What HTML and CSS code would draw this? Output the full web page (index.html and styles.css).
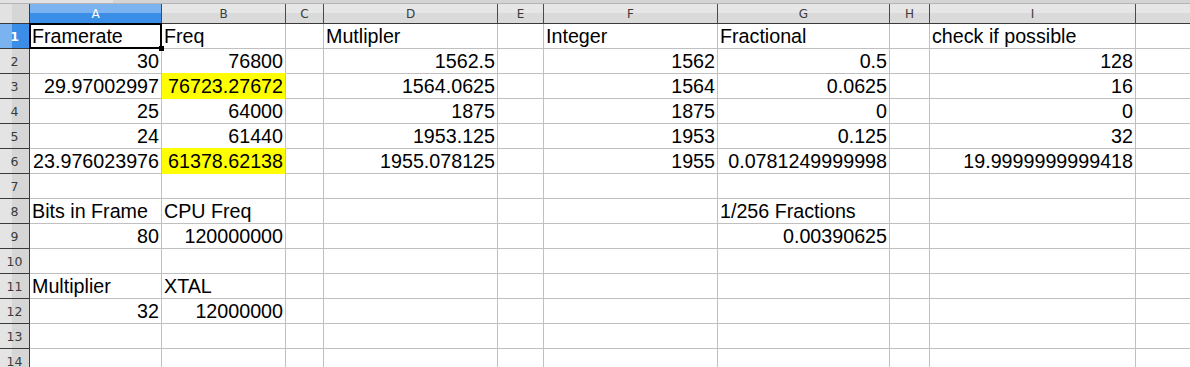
FILE: index.html
```html
<!DOCTYPE html>
<html>
<head>
<meta charset="utf-8">
<link rel="stylesheet" href="styles.css">
</head>
<body>
<div class="topstrip"><div class="tab"></div></div>
<div class="sheet">
  <div class="corner"></div>
  <div class="ch sel">A</div><div class="ch">B</div><div class="ch">C</div><div class="ch">D</div><div class="ch">E</div><div class="ch">F</div><div class="ch">G</div><div class="ch">H</div><div class="ch">I</div><div class="ch last"></div>

  <div class="rh sel">1</div>
  <div class="c cur">Framerate</div><div class="c">Freq</div><div class="c"></div><div class="c">Mutlipler</div><div class="c"></div><div class="c">Integer</div><div class="c">Fractional</div><div class="c"></div><div class="c">check if possible</div><div class="c"></div>

  <div class="rh">2</div>
  <div class="c n">30</div><div class="c n">76800</div><div class="c"></div><div class="c n">1562.5</div><div class="c"></div><div class="c n">1562</div><div class="c n">0.5</div><div class="c"></div><div class="c n">128</div><div class="c"></div>

  <div class="rh">3</div>
  <div class="c n">29.97002997</div><div class="c n hl">76723.27672</div><div class="c"></div><div class="c n">1564.0625</div><div class="c"></div><div class="c n">1564</div><div class="c n">0.0625</div><div class="c"></div><div class="c n">16</div><div class="c"></div>

  <div class="rh">4</div>
  <div class="c n">25</div><div class="c n">64000</div><div class="c"></div><div class="c n">1875</div><div class="c"></div><div class="c n">1875</div><div class="c n">0</div><div class="c"></div><div class="c n">0</div><div class="c"></div>

  <div class="rh">5</div>
  <div class="c n">24</div><div class="c n">61440</div><div class="c"></div><div class="c n">1953.125</div><div class="c"></div><div class="c n">1953</div><div class="c n">0.125</div><div class="c"></div><div class="c n">32</div><div class="c"></div>

  <div class="rh">6</div>
  <div class="c n">23.976023976</div><div class="c n hl">61378.62138</div><div class="c"></div><div class="c n">1955.078125</div><div class="c"></div><div class="c n">1955</div><div class="c n">0.0781249999998</div><div class="c"></div><div class="c n">19.9999999999418</div><div class="c"></div>

  <div class="rh">7</div>
  <div class="c"></div><div class="c"></div><div class="c"></div><div class="c"></div><div class="c"></div><div class="c"></div><div class="c"></div><div class="c"></div><div class="c"></div><div class="c"></div>

  <div class="rh">8</div>
  <div class="c">Bits in Frame</div><div class="c">CPU Freq</div><div class="c"></div><div class="c"></div><div class="c"></div><div class="c"></div><div class="c">1/256 Fractions</div><div class="c"></div><div class="c"></div><div class="c"></div>

  <div class="rh">9</div>
  <div class="c n">80</div><div class="c n">120000000</div><div class="c"></div><div class="c"></div><div class="c"></div><div class="c"></div><div class="c n">0.00390625</div><div class="c"></div><div class="c"></div><div class="c"></div>

  <div class="rh">10</div>
  <div class="c"></div><div class="c"></div><div class="c"></div><div class="c"></div><div class="c"></div><div class="c"></div><div class="c"></div><div class="c"></div><div class="c"></div><div class="c"></div>

  <div class="rh">11</div>
  <div class="c">Multiplier</div><div class="c">XTAL</div><div class="c"></div><div class="c"></div><div class="c"></div><div class="c"></div><div class="c"></div><div class="c"></div><div class="c"></div><div class="c"></div>

  <div class="rh">12</div>
  <div class="c n">32</div><div class="c n">12000000</div><div class="c"></div><div class="c"></div><div class="c"></div><div class="c"></div><div class="c"></div><div class="c"></div><div class="c"></div><div class="c"></div>

  <div class="rh">13</div>
  <div class="c"></div><div class="c"></div><div class="c"></div><div class="c"></div><div class="c"></div><div class="c"></div><div class="c"></div><div class="c"></div><div class="c"></div><div class="c"></div>

  <div class="rh">14</div>
  <div class="c"></div><div class="c"></div><div class="c"></div><div class="c"></div><div class="c"></div><div class="c"></div><div class="c"></div><div class="c"></div><div class="c"></div><div class="c"></div>
</div>
</body>
</html>
```

FILE: styles.css
```css
* { box-sizing: border-box; }
html, body {
  margin: 0;
  padding: 0;
  width: 1190px;
  height: 367px;
  overflow: hidden;
  background: #ffffff;
}
.topstrip {
  height: 4px;
  background: #d4d4d4;
  border-bottom: 1px solid #b4b4b4;
  display: flex;
}
.topstrip .tab {
  width: 113px;
  height: 3px;
  background: #e2e2e2;
}
.sheet {
  display: grid;
  grid-template-columns: 30px 132px 124px 38px 174px 46px 174px 172px 40px 206px 100px;
  grid-template-rows: 20px repeat(14, 25px);
}
.corner {
  background: linear-gradient(90deg, #e2e2e2 12px, #d6d6d6 12px);
  border-right: 1px solid #3a3a3a;
  border-bottom: 1px solid #3a3a3a;
}
.ch {
  background: linear-gradient(#e6e6e6 50%, #dadada 50%);
  border-right: 1px solid #4a4a4a;
  border-bottom: 1px solid #3a3a3a;
  font-family: "DejaVu Sans", sans-serif;
  font-size: 12px;
  color: #3a3a3a;
  display: flex;
  align-items: center;
  justify-content: center;
  padding-top: 1px;
}
.ch.sel {
  background: linear-gradient(#7ab3ef 45%, #3b8ee7 45%);
  color: #ffffff;
}
.ch.last { border-right: none; }
.rh {
  background: linear-gradient(90deg, #e4e4e4 12px, #d6d6d6 12px);
  border-right: 1px solid #3a3a3a;
  border-bottom: 1px solid #3a3a3a;
  font-family: "DejaVu Sans", sans-serif;
  font-size: 12.5px;
  color: #3a3a3a;
  display: flex;
  align-items: center;
  justify-content: center;
  padding-top: 1px;
}
.rh.sel {
  background: linear-gradient(90deg, #7ab3ef 12px, #3b8ee7 12px);
  color: #ffffff;
  font-weight: bold;
}
.c {
  border-right: 1px solid #c0c0c0;
  border-bottom: 1px solid #c0c0c0;
  font-family: "Liberation Sans", Arial, sans-serif;
  font-size: 19.7px;
  line-height: 24px;
  color: #000000;
  white-space: nowrap;
  padding: 0 2px 0 2px;
  text-align: left;
}
.c.n { text-align: right; }
.c.hl {
  background: #ffff00;
  border-bottom-color: #ffff00;
  box-shadow: 0 -1px 0 #ffff00;
}
.c.cur { position: relative; }
.c.cur::after {
  content: "";
  position: absolute;
  left: -1px;
  top: -1px;
  right: -1px;
  bottom: -1px;
  border: 2px solid #000000;
}
.c.cur::before {
  content: "";
  position: absolute;
  right: -3px;
  bottom: -3px;
  width: 5px;
  height: 5px;
  background: #000000;
  z-index: 2;
}
```
